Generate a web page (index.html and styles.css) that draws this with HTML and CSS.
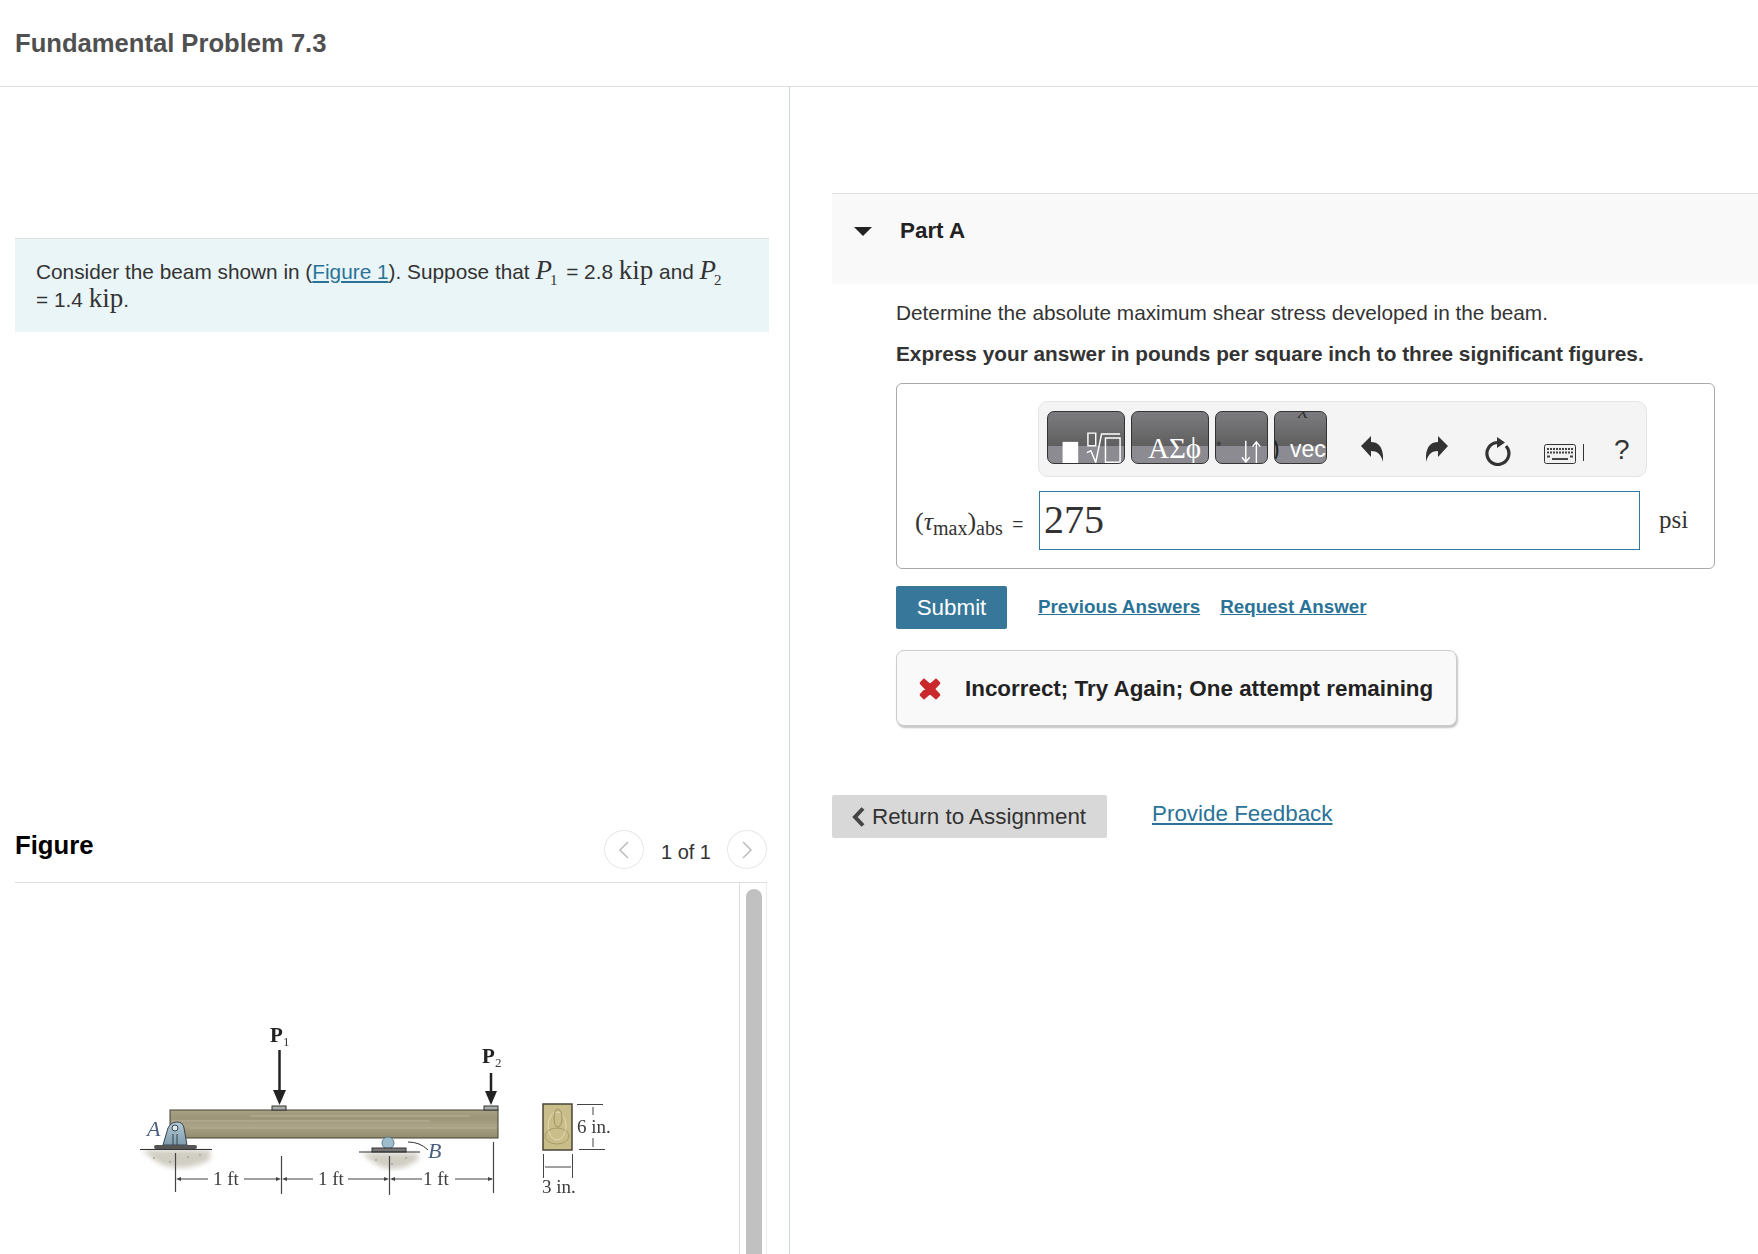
FILE: index.html
```html
<!DOCTYPE html>
<html lang="en">
<head>
<meta charset="UTF-8" />
<title>Fundamental Problem 7.3</title>
<link rel="stylesheet" href="styles.css">
</head>
<body>
  <header class="page-head">
    <h1>Fundamental Problem 7.3</h1>
  </header>

  <main class="layout">
    <section class="left-pane">
      <div class="intro">
        Consider the beam shown in (<a href="#">Figure 1</a>). Suppose that <span class="math"><i>P</i><sub>1</sub></span> = 2.8 <span class="math">kip</span> and <span class="math"><i>P</i><sub>2</sub></span><br>
        = 1.4 <span class="math">kip</span>.
      </div>

      <div class="figure-head">
        <h2>Figure</h2>
        <div class="pager">
          <span class="pager-btn">
            <svg viewBox="0 0 12 20"><path d="M10 2 2 10l8 8" /></svg>
          </span>
          <span class="pager-text">1 of 1</span>
          <span class="pager-btn">
            <svg viewBox="0 0 12 20"><path d="M2 2l8 8-8 8" /></svg>
          </span>
        </div>
      </div>

      <div class="figure-body">
        <div class="figure-view">
          <svg class="beam" viewBox="0 0 500 244" xmlns="http://www.w3.org/2000/svg">
            <defs>
              <linearGradient id="wood" x1="0" y1="0" x2="0" y2="1">
                <stop offset="0" stop-color="#a8a184" />
                <stop offset="0.3" stop-color="#9c9577" />
                <stop offset="0.55" stop-color="#aaa387" />
                <stop offset="1" stop-color="#928b6c" />
              </linearGradient>
              <linearGradient id="steel" x1="0" y1="0" x2="0" y2="1">
                <stop offset="0" stop-color="#b4cad6" />
                <stop offset="1" stop-color="#7f9cae" />
              </linearGradient>
              <filter id="soft"><feGaussianBlur stdDeviation="2.5" /></filter>
              <filter id="tiny"><feGaussianBlur stdDeviation="0.35" /></filter>
            </defs>

            <!-- ground -->
            <g filter="url(#soft)" fill="#d0cec3">
              <path d="M12 140H80V150Q46 166 24 150Z" />
              <path d="M232 143H288V150Q262 168 240 150Z" />
            </g>
            <g fill="#aaa89c">
              <circle cx="24" cy="148" r="1" /><circle cx="40" cy="152" r="1" /><circle cx="58" cy="147" r="1" /><circle cx="70" cy="145" r="1" />
              <circle cx="246" cy="150" r="1" /><circle cx="262" cy="154" r="1" /><circle cx="276" cy="148" r="1" />
            </g>

            <g filter="url(#tiny)">
              <!-- beam -->
              <rect x="40" y="100" width="328" height="28" fill="url(#wood)" stroke="#45433a" stroke-width="1" />
              <path d="M42 111H300M60 118H366M120 106H340" stroke="#b8b298" stroke-width="1" fill="none" />

              <!-- pad under the loads -->
              <rect x="142" y="96" width="14" height="4" fill="#a9adab" stroke="#333" />
              <rect x="354" y="96" width="14" height="4" fill="#a9adab" stroke="#333" />

              <!-- pin at A -->
              <path d="M10 139.500H82" stroke="#333" stroke-width="1" />
              <path d="M33 135 38 118Q41 112 47 112 53 112 54 118L57 135Z" fill="url(#steel)" stroke="#37444d" />
              <circle cx="45" cy="118" r="3" fill="#dfe8ec" stroke="#37444d" />
              <path d="M43 124V135M47 124V135" stroke="#37444d" />
              <rect x="24" y="135" width="43" height="4" rx="2" fill="#555" />

              <!-- roller at B -->
              <circle cx="258" cy="133" r="6" fill="#9dbdcc" stroke="#5d7c8c" />
              <rect x="242" y="138" width="34" height="4" fill="#777" stroke="#333" />
              <path d="M229 142H290" stroke="#333" />
              <path d="M278 132Q290 132 298 140" stroke="#333" fill="none" />

              <!-- loads -->
              <path d="M149.500 40V82" stroke="#222" stroke-width="2.500" />
              <path d="M143 80H156L149.500 95Z" fill="#222" />
              <path d="M361 63V84" stroke="#222" stroke-width="2.500" />
              <path d="M355 81H367L361 95Z" fill="#222" />

              <!-- dimensions -->
              <g stroke="#444" stroke-width="1" fill="none">
                <path d="M45.500 143V182M151.500 146V184M259.500 146V185M363.500 132V183" stroke-width="1.200" />
                <path d="M49 169H78M114 169H148M155 169H183M218 169H257M262 169H292M325 169H362" />
              </g>
              <path d="M46 169l5-2v4ZM151 169l-5-2v4ZM152 169l5-2v4ZM259 169l-5-2v4ZM260 169l5-2v4ZM363 169l-5-2v4Z" fill="#444" />

              <!-- cross section -->
              <rect x="413" y="94" width="29" height="46" fill="#c9bd8a" stroke="#4a4536" stroke-width="1.500" />
              <ellipse cx="427" cy="116" rx="9" ry="14" fill="none" stroke="#e2d9b2" />
              <ellipse cx="427" cy="126" rx="12" ry="8" fill="none" stroke="#a89b66" />
              <ellipse cx="428" cy="108" rx="4" ry="9" fill="none" stroke="#9d9160" />
              <g stroke="#444" stroke-width="1" fill="none">
                <path d="M447 94.500H473M449 139.500H475M463 97V105M463 128V137" />
                <path d="M413.500 144V168M442.500 144V168M415 157H441" />
              </g>
            </g>

            <g class="fig-text" filter="url(#tiny)">
              <text class="fig-bold" x="140" y="32">P</text><text class="fig-sub" x="153" y="36">1</text>
              <text class="fig-bold" x="352" y="53">P</text><text class="fig-sub" x="365" y="57">2</text>
              <text class="fig-point" x="17" y="126">A</text>
              <text class="fig-point" x="298" y="148">B</text>
              <text x="83" y="175">1 ft</text>
              <text x="188" y="175">1 ft</text>
              <text x="293" y="175">1 ft</text>
              <text x="447" y="123">6 in.</text>
              <text x="412" y="183">3 in.</text>
            </g>
          </svg>
        </div>
        <div class="scroll-track"><div class="scroll-thumb"></div></div>
      </div>
    </section>

    <section class="right-pane">
      <div class="part-head">
        <span class="caret"></span>
        <h3>Part A</h3>
      </div>

      <div class="part-body">
        <p class="question">Determine the absolute maximum shear stress developed in the beam.</p>
        <p class="question strong">Express your answer in pounds per square inch to three significant figures.</p>

        <div class="answer-box">
          <div class="toolbar">
            <span class="tool-btn tool-wide">
              <svg class="tool-draw" viewBox="0 0 78 53">
                <rect x="16" y="31" width="16" height="22" fill="#fff" />
                <path d="M42 22h8v13h-8zM60 27h15v25h-15z" fill="none" stroke="#fff" stroke-width="1.500" />
                <path d="M41 42l4-2 5 12 6-29h19" fill="none" stroke="#fff" stroke-width="1.500" />
              </svg>
            </span>
            <span class="tool-btn tool-wide tool-greek">ΑΣϕ</span>
            <span class="tool-btn tool-narrow">
              <span class="tool-star">*</span>
              <svg class="tool-draw" viewBox="0 0 53 53">
                <path d="M32 30V52M28 47l4 5 4-5M43 53V31M39 36l4-5 4 5" fill="none" stroke="#fff" stroke-width="1.500" />
              </svg>
            </span>
            <span class="tool-btn tool-narrow tool-vec">
              <span class="tool-paren">)</span>
              <span class="tool-x">x</span>
              vec
            </span>

            <svg class="tool-icon tool-undo" viewBox="0 0 22 26"><path d="M0 10 10 0V6C18 6 23 12 22 26 20 18 16 15 10 15V21Z" /></svg>
            <svg class="tool-icon tool-redo" viewBox="0 0 22 26"><path d="M22 10 12 0V6C4 6-1 12 0 26 2 18 6 15 12 15V21Z" /></svg>
            <svg class="tool-icon tool-reset" viewBox="0 0 28 30">
              <path d="M22 10A11 11 0 1 1 13 6.500" fill="none" stroke="#333" stroke-width="3.200" />
              <path d="M13 1 21 6.500 13 12Z" fill="#333" />
            </svg>
            <svg class="tool-keys" viewBox="0 0 32 20">
              <rect x="0.500" y="0.500" width="31" height="19" rx="2" fill="#f1f1f1" stroke="#333" />
              <path d="M3 5h26M3 8.500h26" stroke="#444" stroke-width="2" stroke-dasharray="2 1" />
              <path d="M3 12.500h3M26 12.500h3M8 15h16" stroke="#444" stroke-width="2" />
            </svg>
            <span class="tool-sep"></span>
            <span class="tool-help">?</span>
          </div>

          <div class="answer-row">
            <span class="answer-label">(<i>τ</i><span class="label-sub">max</span>)<span class="label-sub">abs</span> <span class="label-eq">=</span></span>
            <div class="answer-input">275</div>
            <span class="answer-unit">psi</span>
          </div>
        </div>

        <div class="actions">
          <button class="submit">Submit</button>
          <a href="#" class="action-link">Previous Answers</a>
          <a href="#" class="action-link">Request Answer</a>
        </div>

        <div class="feedback">
          <svg class="feedback-icon" viewBox="0 0 24 24"><path d="M4 6.500 6.500 4 12 9 17.500 4 20 6.500 15 12 20 17.500 17.500 20 12 15 6.500 20 4 17.500 9 12Z" stroke="#c9282d" stroke-width="3" stroke-linejoin="round" fill="#c9282d" /></svg>
          <span>Incorrect; Try Again; One attempt remaining</span>
        </div>
      </div>

      <div class="return-row">
        <a href="#" class="return-btn">
          <svg viewBox="0 0 14 22"><path d="M11 2.500 3 11l8 8.500" /></svg>
          Return to Assignment
        </a>
        <a href="#" class="provide">Provide Feedback</a>
      </div>
    </section>
  </main>
</body>
</html>
```

FILE: styles.css
```css
* {
  box-sizing: border-box;
}

html, body {
  height: 100%;
}

body {
  margin: 0;
  height: 1254px;
  overflow: hidden;
  font-family: "Liberation Sans", Arial, sans-serif;
  color: #333;
  background: #fff;
}

a {
  color: #2a7397;
}

.page-head {
  height: 87px;
  padding: 28px 15px 0;
  border-bottom: 1px solid #dedede;
}

h1 {
  margin: 0;
  font-size: 25.6px;
  line-height: 30px;
  font-weight: 700;
  color: #505050;
}

.layout {
  display: flex;
  height: 1167px;
}

/* left column */
.left-pane {
  width: 790px;
  flex: none;
  padding: 151px 20px 0 15px;
  border-right: 1px solid #c9d8e2;
  display: flex;
  flex-direction: column;
}

.intro {
  height: 94px;
  padding: 18px 21px 0;
  font-size: 20.8px;
  line-height: 26px;
  background: #eaf5f7;
  border-top: 1px solid #dedede;
}

.math {
  font-family: "Liberation Serif", "Times New Roman", serif;
  font-size: 27px;
}

.math sub {
  font-size: 15px;
  line-height: 0;
  margin: 0 3px 0 -2px;
}

.figure-head {
  margin: 491px 2px 0 0;
  height: 60px;
  display: flex;
  justify-content: space-between;
  align-items: flex-start;
  border-bottom: 1px solid #dedede;
}

h2 {
  margin: 7px 0 0;
  font-size: 25.7px;
  line-height: 30px;
  font-weight: 700;
  color: #000;
}

.pager {
  display: flex;
  align-items: center;
  margin-top: 7px;
}

.pager-btn {
  width: 40px;
  height: 39px;
  border: 1px solid #e8e8e8;
  border-radius: 50%;
  display: flex;
  justify-content: center;
  align-items: center;
}

.pager-btn svg {
  width: 12px;
  height: 20px;
  fill: none;
  stroke: #bdbdbd;
  stroke-width: 1.600;
}

.pager-text {
  margin: 5px 16px 0 17px;
  font-size: 20px;
  color: #333;
}

.figure-body {
  flex: 1;
  display: flex;
  min-height: 0;
  margin-right: 2px;
}

.figure-view {
  flex: 1;
  padding: 127px 0 0 115px;
}

.beam {
  display: block;
  width: 500px;
  height: 244px;
}

.fig-text text {
  font-family: "Liberation Serif", serif;
  font-size: 19px;
  fill: #3c3c3c;
}

.fig-text .fig-bold {
  font-weight: 700;
  font-size: 21px;
  fill: #222;
}

.fig-text .fig-sub {
  font-size: 13px;
}

.fig-text .fig-point {
  font-style: italic;
  font-size: 22px;
  fill: #4a5f80;
}

.scroll-track {
  width: 28px;
  flex: none;
  padding: 6px 4px 0 6px;
  border-left: 1px solid #dedede;
  border-right: 1px solid #ececec;
}

.scroll-thumb {
  height: 100%;
  background: #c1c1c1;
  border-radius: 8px 8px 0 0;
}

/* right column */
.right-pane {
  flex: 1;
  padding: 106px 0 0 42px;
}

.part-head {
  height: 91px;
  padding: 24px 0 0 22px;
  display: flex;
  align-items: flex-start;
  background: #f9f9f9;
  border-top: 1px solid #e0e0e0;
}

.caret {
  margin-top: 9px;
  width: 0;
  height: 0;
  border-left: 9px solid transparent;
  border-right: 9px solid transparent;
  border-top: 9px solid #222;
}

h3 {
  margin: 0 0 0 28px;
  font-size: 22.4px;
  line-height: 26px;
  font-weight: 700;
  color: #222;
}

.part-body {
  padding: 17px 0 0 64px;
}

.question {
  margin: 0 0 17px;
  font-size: 20.8px;
  line-height: 24px;
  color: #333;
}

.strong {
  font-weight: 700;
}

.answer-box {
  width: 819px;
  height: 186px;
  padding: 17px 0 0 141px;
  border: 1px solid #aaa;
  border-radius: 6px;
}

.toolbar {
  width: 609px;
  height: 76px;
  padding: 9px 0 0 8px;
  display: flex;
  align-items: flex-start;
  background: #f4f4f4;
  border: 1px solid #e4e4e4;
  border-radius: 10px;
}

.tool-btn {
  position: relative;
  height: 53px;
  margin-right: 6px;
  overflow: hidden;
  flex: none;
  display: block;
  border: 1px solid #333;
  border-radius: 7px;
  background: linear-gradient(#7c7c80 0, #5f5f5f 66%, #8b8b91 66%, #8b8b91 100%);
  color: #fff;
}

.tool-wide {
  width: 78px;
}

.tool-narrow {
  width: 53px;
}

.tool-draw {
  position: absolute;
  left: -1px;
  top: -1px;
  width: 100%;
  height: 53px;
}

.tool-greek {
  padding: 20px 0 0 16px;
  font-family: "Liberation Serif", serif;
  font-size: 29px;
  line-height: 32px;
  white-space: nowrap;
}

.tool-star {
  position: absolute;
  left: 0;
  top: 26px;
  color: #333;
  font-size: 14px;
}

.tool-vec {
  padding: 24px 0 0 15px;
  font-size: 23px;
  line-height: 26px;
  white-space: nowrap;
}

.tool-paren {
  position: absolute;
  left: -3px;
  top: 24px;
  color: #222;
}

.tool-x {
  position: absolute;
  left: 23px;
  top: -14px;
  color: #333;
  font-family: "Liberation Serif", serif;
  font-style: italic;
}

.tool-icon {
  flex: none;
  fill: #333;
}

.tool-undo {
  width: 22px;
  height: 26px;
  margin: 25px 0 0 28px;
}

.tool-redo {
  width: 22px;
  height: 26px;
  margin: 25px 0 0 43px;
}

.tool-reset {
  width: 28px;
  height: 30px;
  margin: 25px 0 0 36px;
}

.tool-keys {
  flex: none;
  width: 32px;
  height: 20px;
  margin: 33px 0 0 32px;
}

.tool-sep {
  width: 1px;
  height: 17px;
  margin: 33px 0 0 7px;
  background: #333;
}

.tool-help {
  margin: 23px 0 0 30px;
  font-size: 28px;
  line-height: 32px;
  color: #333;
}

.answer-row {
  display: flex;
  align-items: center;
  margin: 14px 0 0 -141px;
}

.answer-label {
  width: 142px;
  padding-left: 18px;
  font-family: "Liberation Serif", serif;
  font-size: 26px;
  white-space: nowrap;
  position: relative;
  top: 1px;
}

.label-sub {
  font-size: 20px;
  position: relative;
  top: 5px;
}

.label-eq {
  margin-left: 3px;
  font-family: "Liberation Sans", sans-serif;
  font-size: 19px;
}

.answer-input {
  width: 601px;
  height: 59px;
  padding-left: 4px;
  border: 1px solid #2f7a9e;
  font-family: "Liberation Serif", serif;
  font-size: 40px;
  line-height: 56px;
  color: #333;
}

.answer-unit {
  margin-left: 19px;
  font-family: "Liberation Serif", serif;
  font-size: 25px;
  position: relative;
  top: -1px;
}

.actions {
  margin-top: 17px;
  display: flex;
  align-items: center;
}

.submit {
  width: 111px;
  height: 43px;
  margin-right: 31px;
  padding: 0;
  border: 0;
  border-radius: 2px;
  background: #37779a;
  color: #fff;
  font-family: inherit;
  font-size: 22.4px;
}

.action-link {
  margin: -2px 20px 0 0;
  font-size: 18.8px;
  font-weight: 700;
}

.feedback {
  width: 561px;
  height: 76px;
  margin-top: 21px;
  padding: 1px 0 0 20px;
  display: flex;
  align-items: center;
  gap: 22px;
  background: #f9f9f9;
  border: 1px solid #ccc;
  border-radius: 8px;
  box-shadow: 1px 2px 2px #c4c4c4;
  font-size: 22.4px;
  font-weight: 700;
  color: #222;
  white-space: nowrap;
}

.feedback-icon {
  width: 26px;
  height: 26px;
  flex: none;
}

.return-row {
  margin-top: 69px;
  display: flex;
  align-items: flex-start;
}

.return-btn {
  width: 275px;
  height: 43px;
  padding-left: 20px;
  display: flex;
  align-items: center;
  gap: 6px;
  background: #d8d8d8;
  border-radius: 2px;
  color: #333;
  font-size: 22.4px;
  text-decoration: none;
}

.return-btn svg {
  width: 14px;
  height: 22px;
  fill: none;
  stroke: #444;
  stroke-width: 4;
}

.provide {
  margin: 6px 0 0 45px;
  font-size: 22.4px;
}
```
